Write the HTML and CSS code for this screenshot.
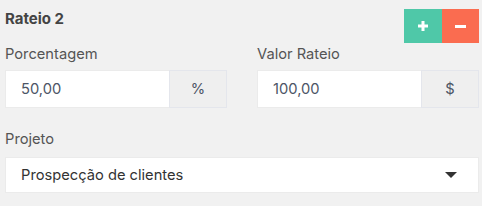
FILE: index.html
```html
<!DOCTYPE html>
<html lang="pt">
<head>
<meta charset="utf-8">
<link rel="stylesheet" href="styles.css">
</head>
<body>
<div class="rateio">
  <div class="header">
    <h3 class="title">Rateio 2</h3>
    <div class="actions">
      <button class="btn btn-add" aria-label="Adicionar">
        <svg width="10" height="10" viewBox="0 0 10 10"><rect x="3.5" y="0" width="3" height="10" fill="#fff"/><rect x="0" y="3.5" width="10" height="3" fill="#fff"/></svg>
      </button>
      <button class="btn btn-remove" aria-label="Remover">
        <svg width="11" height="3" viewBox="0 0 11 3"><rect x="0" y="0" width="11" height="3" fill="#fff"/></svg>
      </button>
    </div>
  </div>
  <div class="row">
    <div class="field">
      <label class="label">Porcentagem</label>
      <div class="group">
        <div class="input">50,00</div>
        <div class="addon">%</div>
      </div>
    </div>
    <div class="field">
      <label class="label">Valor Rateio</label>
      <div class="group">
        <div class="input">100,00</div>
        <div class="addon">$</div>
      </div>
    </div>
  </div>
  <div class="field field-full">
    <label class="label label-tall">Projeto</label>
    <div class="select">
      <span>Prospecção de clientes</span>
      <svg class="caret" width="12" height="6" viewBox="0 0 12 6"><path d="M0 0H12L6 6Z" fill="#333"/></svg>
    </div>
  </div>
</div>
</body>
</html>
```
FILE: styles.css
```css
* { box-sizing: border-box; }
html, body {
  margin: 0;
  background: #f1f1f1;
}
body {
  font-family: Inter, "Noto Sans", sans-serif;
  color: #555;
}
.rateio {
  width: 482px;
  padding: 9px 3px 0 5px;
}
.header {
  display: flex;
  justify-content: space-between;
  align-items: flex-start;
  height: 34px;
}
.title {
  margin: 0;
  padding-top: 1px;
  font-size: 15px;
  font-weight: 700;
  line-height: 17px;
  color: #444;
}
.actions {
  display: flex;
}
.btn {
  width: 37px;
  height: 34px;
  border: 0;
  padding: 0;
  margin: 0;
  display: flex;
  align-items: center;
  justify-content: center;
}
.btn-add {
  width: 38px;
  background: #4fc8a8;
}
.btn-remove {
  background: #fa6c50;
}
.row {
  display: flex;
  gap: 30px;
  margin-top: 1px;
}
.field {
  flex: 1;
}
.label {
  display: block;
  font-size: 14.7px;
  line-height: 20px;
  height: 26px;
  color: #555;
}
.label-tall {
  height: 28px;
}
.group {
  display: flex;
  height: 38px;
}
.input {
  flex: 1;
  background: #fff;
  border: 1px solid #ebebeb;
  border-right: 0;
  padding-left: 15px;
  font-size: 14.7px;
  line-height: 36px;
  color: #4d5566;
}
.addon {
  width: 58px;
  background: #efefef;
  border: 1px solid #e4e6ec;
  text-align: center;
  font-size: 14.7px;
  line-height: 36px;
  color: #4d5566;
}
.field-full {
  margin-top: 21px;
}
.select {
  height: 36px;
  background: #fff;
  border: 1px solid #ebebeb;
  display: flex;
  align-items: center;
  justify-content: space-between;
  padding: 0 21px 0 15px;
  font-size: 14.7px;
  color: #333;
}
.caret {
  display: block;
}
```
